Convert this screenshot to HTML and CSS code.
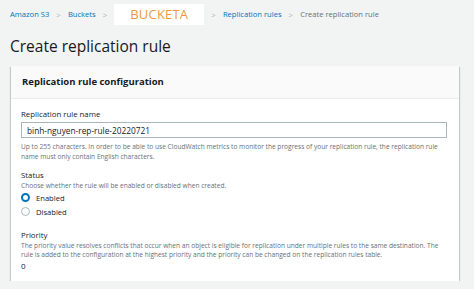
FILE: index.html
```html
<!DOCTYPE html>
<html lang="en">
<head>
    <meta charset="UTF-8">
    <title>Create replication rule</title>
    <link rel="stylesheet" href="styles.css">
</head>
<body>
    <nav class="breadcrumbs">
        <a href="#" class="crumb">Amazon S3</a>
        <span class="sep">&gt;</span>
        <a href="#" class="crumb">Buckets</a>
        <span class="sep">&gt;</span>
        <span class="bucket">BUCKETA</span>
        <span class="sep">&gt;</span>
        <a href="#" class="crumb">Replication rules</a>
        <span class="sep">&gt;</span>
        <span class="current">Create replication rule</span>
    </nav>

    <h1 class="page-title">Create replication rule</h1>

    <div class="card">
        <div class="card-header">Replication rule configuration</div>
        <div class="card-body">
            <div class="field">
                <label class="field-label">Replication rule name</label>
                <input class="text-input" type="text" value="binh-nguyen-rep-rule-20220721">
                <div class="hint">Up to 255 characters. In order to be able to use CloudWatch metrics to monitor the progress of your replication rule, the replication rule name must only contain English characters.</div>
            </div>

            <div class="field">
                <div class="field-label">Status</div>
                <div class="desc">Choose whether the rule will be enabled or disabled when created.</div>
                <label class="radio"><span class="dot checked"></span>Enabled</label>
                <label class="radio"><span class="dot"></span>Disabled</label>
            </div>

            <div class="field">
                <div class="field-label">Priority</div>
                <div class="desc">The priority value resolves conflicts that occur when an object is eligible for replication under multiple rules to the same destination. The rule is added to the configuration at the highest priority and the priority can be changed on the replication rules table.</div>
                <div class="value">0</div>
            </div>
        </div>
    </div>
</body>
</html>
```

FILE: styles.css
```css
:root {
    --bg: #f2f3f3;
    --link: #0073bb;
    --text: #16191f;
    --muted: #687078;
    --border: #eaeded;
}

* {
    margin: 0;
    padding: 0;
    box-sizing: border-box;
}

body {
    font-family: 'Open Sans', sans-serif;
    background-color: var(--bg);
    color: var(--text);
    padding: 0 10px;
    overflow: hidden;
}

.breadcrumbs {
    display: flex;
    align-items: center;
    height: 28px;
    font-size: 7.6px;
}

.crumb {
    color: var(--link);
    text-decoration: none;
}

.sep {
    color: #aab7b8;
    margin: 0 7px;
    font-size: 8px;
}

.bucket {
    background: #fff;
    color: #ec9a3c;
    font-size: 13px;
    letter-spacing: 0.2px;
    padding: 0 16px;
    line-height: 21px;
}

.current {
    color: var(--muted);
}

.page-title {
    font-size: 15.5px;
    font-weight: normal;
    line-height: 20px;
    margin: 7.5px 0 10.5px;
}

.card {
    margin-left: 1px;
    width: 448px;
    background: #fff;
    box-shadow: 0 1px 1px rgba(0, 28, 36, 0.3), 1px 1px 1px rgba(0, 28, 36, 0.15), -1px 1px 1px rgba(0, 28, 36, 0.15);
}

.card-header {
    background: #fafafa;
    border-bottom: 1px solid var(--border);
    height: 33px;
    line-height: 32px;
    padding: 0 11px;
    font-size: 9.5px;
    font-weight: bold;
}

.card-body {
    padding: 9px 10px 9px;
}

.field {
    margin-bottom: 8px;
}

.field + .field + .field {
    margin-top: 10px;
}

.field:last-child {
    margin-bottom: 0;
}

.field-label {
    display: block;
    font-size: 7.8px;
    line-height: 11px;
}

.field-label:first-child {
    line-height: 12px;
}

.text-input {
    display: block;
    width: 426px;
    height: 16px;
    border: 1px solid #aab7b8;
    padding: 0 5px;
    font-family: inherit;
    font-size: 8.3px;
    color: var(--text);
    margin: 2px 0 4px;
}

.hint,
.desc {
    font-size: 6.6px;
    line-height: 9.5px;
    color: var(--muted);
}

.radio {
    display: flex;
    align-items: center;
    gap: 6px;
    font-size: 7.6px;
    line-height: 14px;
}

.dot {
    width: 9px;
    height: 9px;
    border-radius: 50%;
    border: 1px solid #aab7b8;
    background: #fff;
}

.dot.checked {
    border: 2.5px solid var(--link);
}

.value {
    font-size: 8px;
    line-height: 12px;
}
```
